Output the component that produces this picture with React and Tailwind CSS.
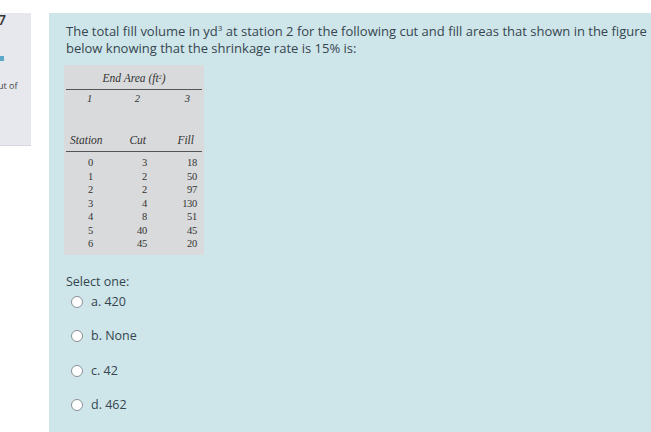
import React from "react";

const rows = [
  ["0", "3", "18"],
  ["1", "2", "50"],
  ["2", "2", "97"],
  ["3", "4", "130"],
  ["4", "8", "51"],
  ["5", "40", "45"],
  ["6", "45", "20"],
];

const options = ["a. 420", "b. None", "c. 42", "d. 462"];

function AreaTable() {
  return (
    <div
      className="ml-[-2px] mt-[8px] w-[140px] bg-[#d9dadb] pb-[4px] pt-[4px] text-[#333] italic"
      style={{ fontFamily: '"Liberation Serif", serif' }}
    >
      <div className="text-center text-[11.5px] leading-[18px]">
        End Area (ft<sup className="text-[6px]">2</sup>)
      </div>
      <div className="mx-[2px] mt-[2px] border-t border-[#555]" />
      <div className="flex pt-[2px] text-[10.5px] leading-[14px]">
        <span className="w-[52px] pl-[23px]">1</span>
        <span className="w-[31px] pr-[7px] text-right">2</span>
        <span className="w-[50px] pr-[7px] text-right">3</span>
      </div>
      <div className="flex pt-[27px] text-[11.5px] leading-[14px]">
        <span className="w-[52px] pl-[6px]">Station</span>
        <span className="w-[31px] pr-[1px] text-right">Cut</span>
        <span className="w-[50px] pr-[3px] text-right">Fill</span>
      </div>
      <div className="mx-[2px] mt-[4px] border-t border-[#555]" />
      <div className="pt-[4px] text-[10.5px] not-italic leading-[13.5px] tracking-[-0.3px]">
        {rows.map(([s, c, f]) => (
          <div key={s} className="flex">
            <span className="w-[52px] pl-[24px]">{s}</span>
            <span className="w-[31px] text-right">{c}</span>
            <span className="w-[50px] text-right">{f}</span>
          </div>
        ))}
      </div>
    </div>
  );
}

export default function App() {
  return (
    <div
      className="flex h-[432px] w-[651px] overflow-hidden bg-white text-[#36454f]"
      style={{ fontFamily: '"Open Sans", sans-serif' }}
    >
      <div className="mt-[13px] h-[133px] w-[31px] shrink-0 overflow-hidden border-b border-[#d5d8de] bg-[#e6e8ed]">
        <div className="ml-[-2px] text-[14px] font-semibold leading-[14px] text-[#333]">7</div>
        <div className="mt-[29px] h-[5px] w-[4px] bg-[#5aa7c8]" />
        <div className="ml-[-2px] mt-[19px] whitespace-nowrap text-[9px] leading-[11px] text-[#444]">
          ut of
        </div>
      </div>
      <div className="ml-[18px] mt-[13px] flex-1 bg-[#cee5ea] pl-[17px] pt-[10px]">
        <p className="w-[585px] text-[13px] leading-[17px]">
          The total fill volume in yd
          <span className="relative top-[-5px] text-[8px] leading-none">3</span> at station 2
          for the following cut and fill areas that shown in the figure below knowing that
          the shrinkage rate is 15% is:
        </p>
        <AreaTable />
        <div className="mt-[19px] text-[12.5px] leading-[16px]">Select one:</div>
        <div className="mt-[4px] flex flex-col gap-[18.5px] pl-[5px]">
          {options.map((o) => (
            <label key={o} className="flex items-center gap-[8px] text-[12.5px] leading-[16px]">
              <span className="h-[12px] w-[12px] rounded-full border border-[#8a8f94] bg-white" />
              {o}
            </label>
          ))}
        </div>
      </div>
    </div>
  );
}
